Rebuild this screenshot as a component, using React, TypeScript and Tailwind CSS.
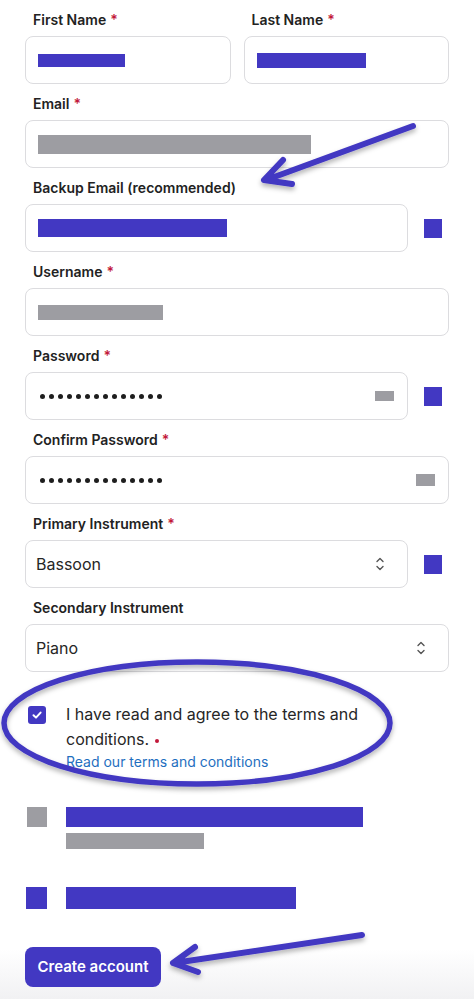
import React from 'react'

const BLUE = 'bg-[#4238c2]'

function Label({ text, required }: { text: string; required?: boolean }) {
  return (
    <div className="h-5 pl-2 text-[14px] leading-5 font-semibold text-[#222]">
      {text}
      {required && <span className="ml-1 text-[#c2183a]">*</span>}
    </div>
  )
}

function Box({ children }: { children?: React.ReactNode }) {
  return (
    <div className="flex h-12 w-full items-center rounded-lg border border-[#dcdcdf] bg-white pl-[12px] pr-[13px]">
      {children}
    </div>
  )
}

function SideSquare() {
  return (
    <div className="flex w-[41px] shrink-0 items-center">
      <div className={`ml-4 h-[19px] w-[18px] ${BLUE}`} />
    </div>
  )
}

function Dots() {
  return (
    <div className="flex gap-[4px]">
      {Array.from({ length: 14 }).map((_, i) => (
        <span key={i} className="h-[5px] w-[5px] rounded-full bg-[#1e1e1e]" />
      ))}
    </div>
  )
}

function UpDown() {
  return (
    <svg className="mr-[8px]" width="12" height="16" viewBox="0 0 12 16" fill="none" stroke="#555" strokeWidth="1.4" strokeLinecap="round" strokeLinejoin="round">
      <path d="M3 5.5 6 2.5 9 5.5" />
      <path d="M3 10.5 6 13.5 9 10.5" />
    </svg>
  )
}

function Field({ label, required, side, children }: { label: string; required?: boolean; side?: boolean; children?: React.ReactNode }) {
  return (
    <div className="flex flex-col gap-[6px] pb-[10px]">
      <Label text={label} required={required} />
      <div className="flex">
        <div className="min-w-0 flex-1">
          <Box>{children}</Box>
        </div>
        {side && <SideSquare />}
      </div>
    </div>
  )
}

export default function App() {
  return (
    <div className="relative h-[999px] w-[474px] overflow-hidden bg-gradient-to-b from-white from-[95%] to-[#f1f1f3] font-['Inter','Liberation_Sans',sans-serif] text-[#262626]">
      <div className="px-[25px] pt-[10px]">
        <div className="flex gap-[13px]">
          <div className="flex min-w-0 flex-1 flex-col gap-[6px] pb-[10px]">
            <Label text="First Name" required />
            <Box><div className={`h-[13px] w-[87px] ${BLUE}`} /></Box>
          </div>
          <div className="flex min-w-0 flex-1 flex-col gap-[6px] pb-[10px]">
            <Label text="Last Name" required />
            <Box><div className={`h-[15px] w-[109px] ${BLUE}`} /></Box>
          </div>
        </div>

        <Field label="Email" required>
          <div className="h-[19px] w-[273px] bg-[#9d9da2]" />
        </Field>

        <Field label="Backup Email (recommended)" side>
          <div className={`h-[18px] w-[189px] ${BLUE}`} />
        </Field>

        <Field label="Username" required>
          <div className="h-[15px] w-[125px] bg-[#9d9da2]" />
        </Field>

        <Field label="Password" required side>
          <div className="flex flex-1 items-center justify-between pl-[2px]">
            <Dots />
            <div className="h-[10px] w-[19px] bg-[#9d9da2]" />
          </div>
        </Field>

        <Field label="Confirm Password" required>
          <div className="flex flex-1 items-center justify-between pl-[2px]">
            <Dots />
            <div className="h-[12px] w-[19px] bg-[#9d9da2]" />
          </div>
        </Field>

        <Field label="Primary Instrument" required side>
          <div className="-ml-[2px] flex flex-1 items-center justify-between">
            <span className="text-[16px] text-[#262626]">Bassoon</span>
            <UpDown />
          </div>
        </Field>

        <Field label="Secondary Instrument">
          <div className="-ml-[2px] flex flex-1 items-center justify-between">
            <span className="text-[16px] text-[#262626]">Piano</span>
            <UpDown />
          </div>
        </Field>

        <div className="mt-[20px] flex">
          <div className="flex w-[41px] shrink-0 pt-[3.5px]">
            <div className={`ml-[3px] flex h-[18px] w-[18px] items-center justify-center rounded-[3px] ${BLUE}`}>
              <svg width="12" height="12" viewBox="0 0 12 12" fill="none" stroke="white" strokeWidth="2" strokeLinecap="round" strokeLinejoin="round">
                <path d="M2.5 6.2 5 8.6 9.6 3.6" />
              </svg>
            </div>
          </div>
          <div className="flex flex-col">
            <p className="text-[16px] leading-[25px] text-[#262626]">
              I have read and agree to the terms and
              <br />
              conditions.
              <span className="ml-[6px] inline-block h-[4px] w-[4px] rounded-full bg-[#c2183a] align-middle" />
            </p>
            <a className="text-[14px] leading-5 text-[#1f6fc0]">Read our terms and conditions</a>
          </div>
        </div>

        <div className="mt-[35px] flex">
          <div className="w-[41px] shrink-0">
            <div className="ml-[2px] h-5 w-5 bg-[#9d9da2]" />
          </div>
          <div className="flex flex-col gap-[6px]">
            <div className={`h-5 w-[297px] ${BLUE}`} />
            <div className="h-4 w-[138px] bg-[#9d9da2]" />
          </div>
        </div>

        <div className="mt-[38px] flex">
          <div className="w-[41px] shrink-0">
            <div className={`ml-[1px] h-[22px] w-[21px] ${BLUE}`} />
          </div>
          <div className={`h-[22px] w-[230px] ${BLUE}`} />
        </div>

        <button className={`mt-[38px] h-10 w-[136px] rounded-lg ${BLUE} text-[15px] font-semibold text-white`}>
          Create account
        </button>
      </div>

      <svg className="pointer-events-none absolute inset-0" width="474" height="999" viewBox="0 0 474 999" fill="none">
        <defs>
          <filter id="sh" x="-10%" y="-10%" width="120%" height="130%">
            <feDropShadow dx="0" dy="3" stdDeviation="2.5" floodColor="#000" floodOpacity="0.3" />
          </filter>
        </defs>
        <g stroke="#4238c2" strokeLinecap="round" strokeLinejoin="round" filter="url(#sh)">
          <ellipse cx="197" cy="723" rx="193" ry="61" strokeWidth="5.5" />
          <path d="M413 126 266 180 M283 160 264 180 292 184" strokeWidth="6" />
          <path d="M362 935 174 963 M195 947 173 963 198 972" strokeWidth="6" />
        </g>
      </svg>
    </div>
  )
}
